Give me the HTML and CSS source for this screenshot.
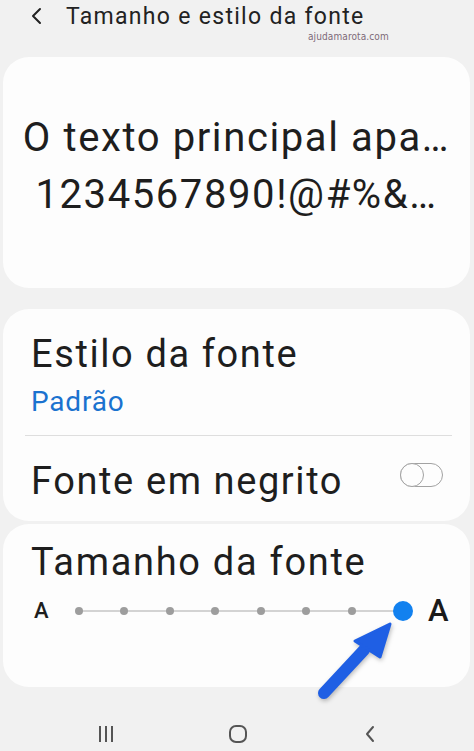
FILE: index.html
```html
<!DOCTYPE html>
<html lang="pt">
<head>
<meta charset="utf-8">
<title>Tamanho e estilo da fonte</title>
<link rel="stylesheet" href="styles.css">
</head>
<body>
<div class="screen">
  <header class="topbar">
    <svg class="back" width="14" height="18" viewBox="0 0 14 18"><path d="M10 2 L3 9 L10 16" fill="none" stroke="#222" stroke-width="2" stroke-linecap="round" stroke-linejoin="round"/></svg>
    <h1 class="title">Tamanho e estilo da fonte</h1>
    <span class="watermark">ajudamarota.com</span>
  </header>

  <main class="cards">
    <section class="card preview">
      <p class="preview-line">O texto principal apa…</p>
      <p class="preview-line">1234567890!@#%&amp;…</p>
    </section>

    <section class="card settings">
      <div class="row row-style">
        <div class="row-title">Estilo da fonte</div>
        <div class="row-sub">Padrão</div>
      </div>
      <div class="divider"></div>
      <div class="row row-bold">
        <div class="row-title">Fonte em negrito</div>
        <span class="toggle"><span class="knob"></span></span>
      </div>
    </section>

    <section class="card size">
      <div class="row-title size-title">Tamanho da fonte</div>
      <div class="slider">
        <span class="a-small">A</span>
        <div class="track">
          <span class="dot"></span><span class="dot"></span><span class="dot"></span><span class="dot"></span>
          <span class="dot"></span><span class="dot"></span><span class="dot"></span><span class="thumb"></span>
        </div>
        <span class="a-big">A</span>
      </div>
      <svg class="arrow" width="90" height="90" viewBox="0 0 90 90">
        <g fill="#1f5fe4" stroke="#1f5fe4" stroke-linejoin="round" stroke-linecap="round">
          <line x1="12" y1="83" x2="52" y2="40" stroke-width="12"/>
          <polygon points="78,14 43,31 68,47" stroke-width="3"/>
        </g>
      </svg>
    </section>
  </main>

  <nav class="navbar">
    <svg class="nav-recent" width="18" height="18" viewBox="0 0 18 18"><g stroke="#555" stroke-width="2"><line x1="3" y1="1" x2="3" y2="17"/><line x1="9" y1="1" x2="9" y2="17"/><line x1="15" y1="1" x2="15" y2="17"/></g></svg>
    <svg class="nav-home" width="20" height="20" viewBox="0 0 20 20"><rect x="2" y="2" width="16" height="16" rx="6" fill="none" stroke="#555" stroke-width="2"/></svg>
    <svg class="nav-back" width="14" height="18" viewBox="0 0 14 18"><path d="M10 2 L4 9 L10 16" fill="none" stroke="#555" stroke-width="2" stroke-linecap="round" stroke-linejoin="round"/></svg>
  </nav>
</div>
</body>
</html>
```
FILE: styles.css
```css
* { box-sizing: border-box; }
html, body { margin: 0; padding: 0; }
body {
  background: #f1f1f1;
  font-family: Roboto, "Noto Sans", "Liberation Sans", sans-serif;
  color: #1e1e1e;
}
.screen {
  width: 474px;
  height: 751px;
  display: flex;
  flex-direction: column;
  overflow: hidden;
}
.topbar {
  position: relative;
  height: 57px;
  display: flex;
  align-items: flex-start;
  padding: 4px 0 0 30px;
}
.back { margin-top: 3px; }
.title {
  margin: 0 0 0 22px;
  font-weight: 400;
  font-size: 23px;
  line-height: 26px;
  letter-spacing: 1.3px;
  color: #222;
}
.watermark {
  position: absolute;
  left: 308px;
  top: 31px;
  font-family: "DejaVu Sans Condensed", "DejaVu Sans", sans-serif;
  font-size: 10px;
  letter-spacing: 0.1px;
  color: #7d6a78;
}
.cards {
  display: flex;
  flex-direction: column;
  padding: 0 4px 0 3px;
}
.card {
  background: #fdfdfd;
  border-radius: 26px;
}
.preview {
  height: 231px;
  display: flex;
  flex-direction: column;
  justify-content: center;
  align-items: center;
  padding-bottom: 14px;
}
.preview-line {
  margin: 0;
  font-size: 40px;
  line-height: 57px;
  letter-spacing: 1.6px;
  color: #1e1e1e;
  white-space: nowrap;
}
.settings {
  margin-top: 21px;
  height: 212px;
}
.row { padding: 0 28px; }
.row-style { padding-top: 23px; padding-bottom: 17px; }
.row-title {
  font-size: 38px;
  line-height: 44px;
  letter-spacing: 1.6px;
  color: #1e1e1e;
  white-space: nowrap;
}
.row-sub {
  margin-top: 10px;
  font-size: 28px;
  line-height: 32px;
  letter-spacing: 0.8px;
  color: #1a72cf;
}
.divider {
  height: 1px;
  background: #dedede;
  margin: 0 18px 0 22px;
}
.row-bold {
  padding-top: 23px;
  display: flex;
  justify-content: space-between;
  align-items: center;
}
.toggle {
  position: relative;
  width: 43px;
  height: 24px;
  border: 1.5px solid #a2a2a2;
  border-radius: 12px;
  margin-right: -1px;
  margin-bottom: 12px;
}
.knob {
  position: absolute;
  left: -1.5px;
  top: -1.5px;
  width: 24px;
  height: 24px;
  border: 1.5px solid #a2a2a2;
  border-radius: 50%;
  background: #fdfdfd;
}
.size {
  position: relative;
  margin-top: 3px;
  height: 163px;
  padding: 16px 0 0 28px;
}
.size-title { letter-spacing: 1.7px; }
.slider {
  display: flex;
  align-items: center;
  margin-top: 8px;
}
.a-small {
  width: 44px;
  padding-left: 3px;
  font-size: 22px;
  font-weight: 500;
  color: #1e1e1e;
}
.track {
  position: relative;
  width: 338px;
  height: 24px;
  display: flex;
  align-items: center;
  justify-content: space-between;
}
.track::before {
  content: "";
  position: absolute;
  left: 4px;
  right: 10px;
  top: 11px;
  height: 2px;
  background: #d3d3d3;
}
.dot {
  position: relative;
  width: 8px;
  height: 8px;
  border-radius: 50%;
  background: #9d9d9d;
}
.thumb {
  position: relative;
  width: 20px;
  height: 20px;
  border-radius: 50%;
  background: #1281ef;
}
.a-big {
  margin-left: 15px;
  font-size: 31px;
  font-weight: 500;
  color: #1a1a1a;
}
.arrow {
  position: absolute;
  left: 309px;
  top: 86px;
  filter: drop-shadow(1px 2px 2px rgba(0,0,0,0.25));
}
.navbar {
  flex: 1;
  display: flex;
  align-items: center;
  padding: 30px 0 0 97px;
}
.nav-home { margin-left: 113px; }
.nav-back { margin-left: 115px; }
```
